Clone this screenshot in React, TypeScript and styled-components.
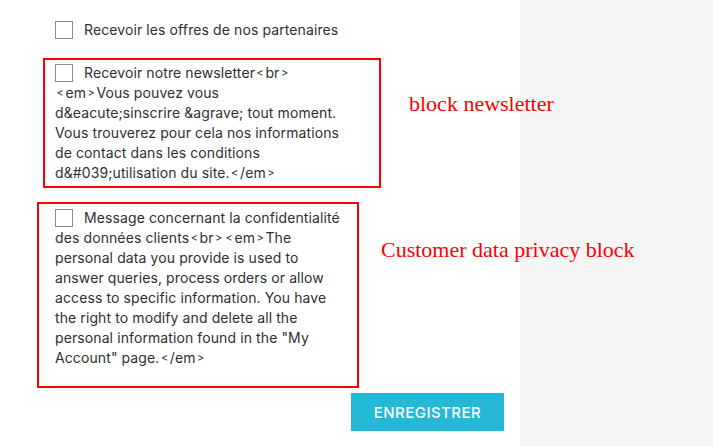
import React from "react";
import styled, { createGlobalStyle } from "styled-components";

const Global = createGlobalStyle`
  html, body { margin: 0; padding: 0; }
  body { background: #fff; font-family: Inter, "Noto Sans", sans-serif; }
`;

const Page = styled.div`
  position: relative;
  display: flex;
  width: 713px;
  height: 446px;
  overflow: hidden;
`;

const Main = styled.main`
  width: 520px;
  background: #fff;
  display: flex;
  flex-direction: column;
  align-items: flex-start;
`;

const Aside = styled.aside`
  flex: 1;
  background: #f5f5f5;
`;

const Hint = styled.div`
  margin: -17px 0 0 55px;
  font-size: 14px;
  line-height: 20px;
  color: #8a8a8a;
  letter-spacing: 0.3px;
`;

const Group = styled.div<{
  $left: number;
  $width: number;
  $outlined?: boolean;
  $pt: number;
  $pb: number;
  $pl: number;
  $mt: number;
}>`
  box-sizing: border-box;
  margin: ${(p) => p.$mt}px 0 0 ${(p) => p.$left}px;
  width: ${(p) => p.$width}px;
  padding: ${(p) => p.$pt}px 0 ${(p) => p.$pb}px ${(p) => p.$pl}px;
  border: 2px solid ${(p) => (p.$outlined ? "#ff0000" : "transparent")};
`;

const Label = styled.label`
  display: block;
  font-size: 14px;
  line-height: 20px;
  color: #2f2f2f;
  letter-spacing: 0.1px;
`;

const Line = styled.span`
  display: block;
  white-space: nowrap;
`;

const Box = styled.span`
  display: inline-block;
  box-sizing: border-box;
  width: 18px;
  height: 18px;
  border: 1px solid #8c8c8c;
  background: #fff;
  vertical-align: -4px;
  margin-right: 11px;
`;

const Br = styled.span`
  font-size: 11px;
  padding: 0 1.5px;
  vertical-align: 1px;
`;

const Submit = styled.button`
  margin: 5px 0 0 351px;
  width: 153px;
  height: 38px;
  border: none;
  background: #25b9d7;
  color: #fff;
  font-family: Inter, "Noto Sans", sans-serif;
  font-size: 15px;
  font-weight: 500;
  text-transform: uppercase;
  letter-spacing: 0.45px;
  padding: 0;
`;

const Note = styled.div<{ $x: number; $y: number }>`
  position: absolute;
  left: ${(p) => p.$x}px;
  top: ${(p) => p.$y}px;
  font-family: "Liberation Serif", serif;
  font-size: 22px;
  line-height: 26px;
  color: #ff0000;
  white-space: nowrap;
`;

const Tag = ({ t }: { t: string }) => (
  <>
    <Br>{"<"}</Br>
    {t}
    <Br>{">"}</Br>
  </>
);

export default function App() {
  return (
    <Page>
      <Global />
      <Main>
        <Hint>(Ex. : 31/05/1970)</Hint>
        <Group $left={43} $width={338} $pt={5} $pb={0} $pl={10} $mt={10}>
          <Label>
            <Line>
              <Box />
              Recevoir les offres de nos partenaires
            </Line>
          </Label>
        </Group>
        <Group $outlined $left={43} $width={338} $pt={3} $pb={3} $pl={10} $mt={16}>
          <Label>
            <Line>
              <Box />
              Recevoir notre newsletter<Tag t="br" />
            </Line>
            <Line>
              <Tag t="em" />Vous pouvez vous
            </Line>
            <Line>d&amp;eacute;sinscrire &amp;agrave; tout moment.</Line>
            <Line>Vous trouverez pour cela nos informations</Line>
            <Line>de contact dans les conditions</Line>
            <Line>
              d&amp;#039;utilisation du site.<Tag t="/em" />
            </Line>
          </Label>
        </Group>
        <Group $outlined $left={37} $width={322} $pt={4} $pb={18} $pl={16} $mt={14}>
          <Label>
            <Line>
              <Box />
              Message concernant la confidentialité
            </Line>
            <Line>
              des données clients<Tag t="br" />
              <Tag t="em" />The
            </Line>
            <Line>personal data you provide is used to</Line>
            <Line>answer queries, process orders or allow</Line>
            <Line>access to specific information. You have</Line>
            <Line>the right to modify and delete all the</Line>
            <Line>personal information found in the "My</Line>
            <Line>
              Account" page.<Tag t="/em" />
            </Line>
          </Label>
        </Group>
        <Submit type="submit">Enregistrer</Submit>
      </Main>
      <Aside />
      <Note $x={409} $y={91}>block newsletter</Note>
      <Note $x={381} $y={237}>Customer data privacy block</Note>
    </Page>
  );
}
